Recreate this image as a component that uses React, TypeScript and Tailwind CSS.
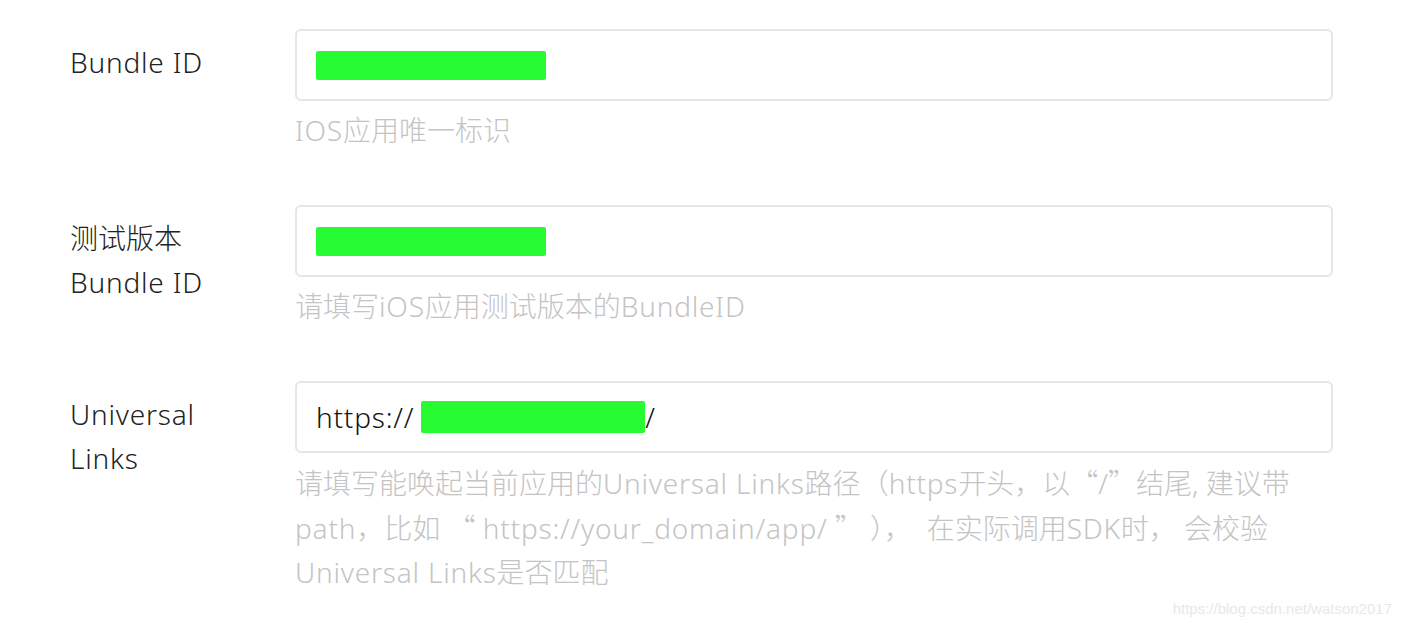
import React from 'react';

const FONT = { fontFamily: '"Noto Sans", "Noto Sans CJK SC", sans-serif' };
const CJK = { fontFamily: '"Noto Sans CJK SC", sans-serif' };

interface FieldProps {
  label: React.ReactNode;
  value: React.ReactNode;
  help: React.ReactNode;
}

const Mark: React.FC<{ className: string }> = ({ className }) => (
  <span className={`inline-block rounded-[2px] bg-[#27fb31] align-middle ${className}`} />
);

// full-width punctuation from the CJK face
const Q: React.FC<{ children: React.ReactNode }> = ({ children }) => <span style={CJK}>{children}</span>;
// latin runs are set a little wider in the original
const L: React.FC<{ children: React.ReactNode }> = ({ children }) => <span className="tracking-[0.8px]">{children}</span>;

const Field: React.FC<FieldProps> = ({ label, value, help }) => (
  <div className="grid grid-cols-[225px_1fr] pb-[53px]">
    <div className="pt-[11px] text-[28px] font-light leading-[44px] text-[#222]">{label}</div>
    <div>
      <div className="flex h-[72px] items-center rounded-[6px] border-2 border-[#e6e6e6] bg-white px-[19px] text-[28px] font-light text-[#111]">
        {value}
      </div>
      <div className="mt-[7px] whitespace-pre text-[28px] font-light leading-[44px] text-[#c4c4c4]">{help}</div>
    </div>
  </div>
);

export default function App() {
  return (
    <div className="relative h-[628px] w-[1402px] overflow-hidden bg-white" style={FONT}>
      <div className="pl-[70px] pr-[69px] pt-[29px]">
        <Field
          label={<L>Bundle ID</L>}
          value={<Mark className="h-[29px] w-[230px]" />}
          help={
            <>
              <L>IOS</L>应用唯一标识
            </>
          }
        />
        <Field
          label={
            <>
              测试版本
              <br />
              <L>Bundle ID</L>
            </>
          }
          value={<Mark className="h-[29px] w-[230px]" />}
          help={
            <>
              请填写<L>iOS</L>应用测试版本的<L>BundleID</L>
            </>
          }
        />
        <Field
          label={
            <>
              <L>Universal</L>
              <br />
              <L>Links</L>
            </>
          }
          value={
            <span className="flex items-center">
              <L>https://</L>
              <Mark className="ml-[7px] h-[32px] w-[224px]" />/
            </span>
          }
          help={
            <>
              请填写能唤起当前应用的<L>Universal Links</L>路径<Q>（</Q><L>https</L>开头<Q>，</Q>以<Q>“</Q>/<Q>”</Q>结尾, 建议带
              <br />
              <L>path</L><Q>，</Q>比如 <Q>“</Q> <L>https://your_domain/app/</L> <Q>”</Q> <Q>）</Q><Q>，</Q>  在实际调用<L>SDK</L>时<Q>，</Q> 会校验
              <br />
              <L>Universal Links</L>是否匹配
            </>
          }
        />
      </div>
      <div className="absolute bottom-[8px] right-[10px] text-[15px] text-[#e8e8e8]" style={{ fontFamily: '"Liberation Sans", Arial, sans-serif' }}>
        https://blog.csdn.net/watson2017
      </div>
    </div>
  );
}
